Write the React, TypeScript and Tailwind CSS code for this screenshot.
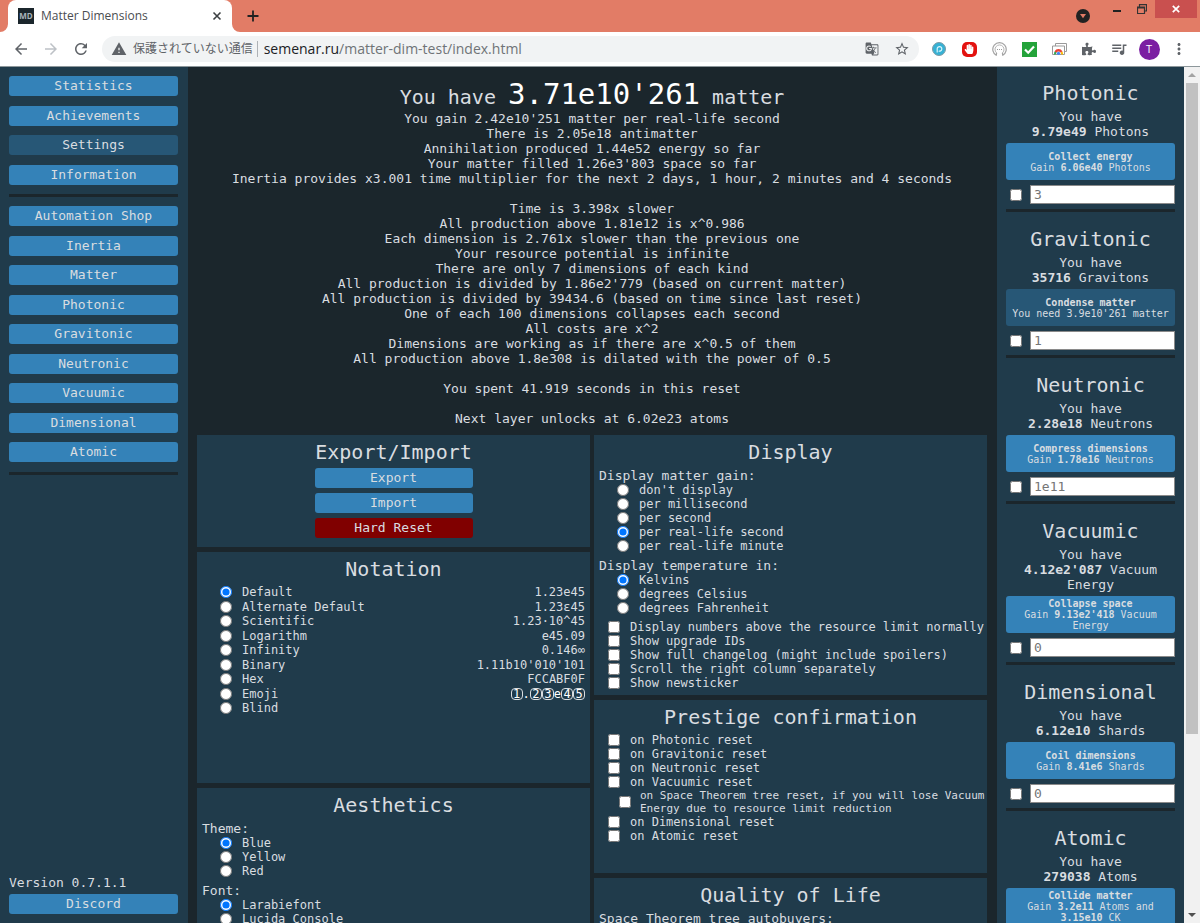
import React, { useId } from "react";
import { FaHandPaper, FaPuzzlePiece } from "react-icons/fa";
import {
  MdArrowBack,
  MdArrowForward,
  MdGTranslate,
  MdMoreVert,
  MdQueueMusic,
  MdRefresh,
  MdStarBorder,
  MdWarning,
} from "react-icons/md";

type NavItem = { label: string; active?: boolean };

type Layer = {
  name: string;
  amount: string;
  unit: string;
  action: string;
  prefix: string;
  gain?: string;
  suffix?: string;
  gain2?: string;
  suffix2?: string;
  locked?: boolean;
  value: string;
};

type Notation = { label: string; sample: React.ReactNode };

const mainNav: NavItem[] = [
  { label: "Statistics" },
  { label: "Achievements" },
  { label: "Settings", active: true },
  { label: "Information" },
];

const layerNav: NavItem[] = [
  { label: "Automation Shop" },
  { label: "Inertia" },
  { label: "Matter" },
  { label: "Photonic" },
  { label: "Gravitonic" },
  { label: "Neutronic" },
  { label: "Vacuumic" },
  { label: "Dimensional" },
  { label: "Atomic" },
];

// empty strings are blank lines
const summary: string[] = [
  "You gain 2.42e10'251 matter per real-life second",
  "There is 2.05e18 antimatter",
  "Annihilation produced 1.44e52 energy so far",
  "Your matter filled 1.26e3'803 space so far",
  "Inertia provides x3.001 time multiplier for the next 2 days, 1 hour, 2 minutes and 4 seconds",
  "",
  "Time is 3.398x slower",
  "All production above 1.81e12 is x^0.986",
  "Each dimension is 2.761x slower than the previous one",
  "Your resource potential is infinite",
  "There are only 7 dimensions of each kind",
  "All production is divided by 1.86e2'779 (based on current matter)",
  "All production is divided by 39434.6 (based on time since last reset)",
  "One of each 100 dimensions collapses each second",
  "All costs are x^2",
  "Dimensions are working as if there are x^0.5 of them",
  "All production above 1.8e308 is dilated with the power of 0.5",
  "",
  "You spent 41.919 seconds in this reset",
  "",
  "Next layer unlocks at 6.02e23 atoms",
];

const notations: Notation[] = [
  { label: "Default", sample: "1.23e45" },
  { label: "Alternate Default", sample: "1.23ε45" },
  { label: "Scientific", sample: "1.23·10^45" },
  { label: "Logarithm", sample: "e45.09" },
  { label: "Infinity", sample: "0.146∞" },
  { label: "Binary", sample: "1.11b10'010'101" },
  { label: "Hex", sample: "FCCABF0F" },
  { label: "Emoji", sample: <EmojiNumber value="1.23e45" /> },
  { label: "Blind", sample: "" },
];

const layers: Layer[] = [
  {
    name: "Photonic",
    amount: "9.79e49",
    unit: "Photons",
    action: "Collect energy",
    prefix: "Gain ",
    gain: "6.06e40",
    suffix: " Photons",
    value: "3",
  },
  {
    name: "Gravitonic",
    amount: "35716",
    unit: "Gravitons",
    action: "Condense matter",
    prefix: "You need 3.9e10'261 matter",
    locked: true,
    value: "1",
  },
  {
    name: "Neutronic",
    amount: "2.28e18",
    unit: "Neutrons",
    action: "Compress dimensions",
    prefix: "Gain ",
    gain: "1.78e16",
    suffix: " Neutrons",
    value: "1e11",
  },
  {
    name: "Vacuumic",
    amount: "4.12e2'087",
    unit: "Vacuum Energy",
    action: "Collapse space",
    prefix: "Gain ",
    gain: "9.13e2'418",
    suffix: " Vacuum Energy",
    value: "0",
  },
  {
    name: "Dimensional",
    amount: "6.12e10",
    unit: "Shards",
    action: "Coil dimensions",
    prefix: "Gain ",
    gain: "8.41e6",
    suffix: " Shards",
    value: "0",
  },
  {
    name: "Atomic",
    amount: "279038",
    unit: "Atoms",
    action: "Collide matter",
    prefix: "Gain ",
    gain: "3.2e11",
    suffix: " Atoms and ",
    gain2: "3.15e10",
    suffix2: " CK",
    value: "0",
  },
];

/* ---------- browser chrome ---------- */

function TabStrip() {
  return (
    <div className="flex h-8 shrink-0 items-start bg-[#e27c66]">
      <div className="relative ml-2 flex h-8 w-56 items-center rounded-t-lg bg-white pr-2.5 pl-2.5">
        <svg
          className="absolute bottom-0 -left-2 size-2"
          viewBox="0 0 8 8"
          aria-hidden="true"
        >
          <path d="M8 0v8H0a8 8 0 0 0 8-8z" fill="#fff" />
        </svg>
        <svg
          className="absolute -right-2 bottom-0 size-2"
          viewBox="0 0 8 8"
          aria-hidden="true"
        >
          <path d="M0 0v8h8a8 8 0 0 1-8-8z" fill="#fff" />
        </svg>
        <span className="flex size-4 items-center justify-center bg-[#1b262c] text-[8px] font-bold text-[#a9b4ba]">
          MD
        </span>
        <span className="ml-[7px] flex-1 text-xs text-[#4a4d51]">
          Matter Dimensions
        </span>
        <button type="button" aria-label="Close tab">
          <svg className="size-2.5" viewBox="0 0 10 10" aria-hidden="true">
            <path d="M1.5 1.5l7 7M8.5 1.5l-7 7" stroke="#3c4043" strokeWidth="1.6" />
          </svg>
        </button>
      </div>
      <button type="button" aria-label="New tab" className="mt-2.5 ml-[15px]">
        <svg className="size-3" viewBox="0 0 12 12" aria-hidden="true">
          <path d="M6 .5v11M.5 6h11" stroke="#222" strokeWidth="1.8" />
        </svg>
      </button>
      <button type="button" aria-label="Search tabs" className="mt-[9px] ml-auto">
        <svg className="size-3.5" viewBox="0 0 14 14" aria-hidden="true">
          <circle cx="7" cy="7" r="7" fill="#222" />
          <path d="M4 5h6L7 9.2z" fill="#e27c66" />
        </svg>
      </button>
      <div className="mr-[3px] ml-[23px] flex h-[18px] items-center">
        <button type="button" aria-label="Minimize">
          <svg className="h-4 w-2" viewBox="0 0 8 16" aria-hidden="true">
            <path d="M0 9h8v2H0z" fill="#222" />
          </svg>
        </button>
        <button type="button" aria-label="Restore" className="ml-4">
          <svg className="size-2.5" viewBox="0 0 10 10" aria-hidden="true">
            <path
              d="M.5 3h7v6.5h-7zM.5 3.8h7M2.5 3V.6h7V7h-2"
              fill="none"
              stroke="#333"
              strokeWidth="1.2"
            />
          </svg>
        </button>
        <button
          type="button"
          aria-label="Close"
          className="ml-2 flex h-[18px] w-[42px] items-center justify-center bg-[#c9504f]"
        >
          <svg className="size-2" viewBox="0 0 8 8" aria-hidden="true">
            <path d="M.8.8l6.4 6.4M7.2.8L.8 7.2" stroke="#fff" strokeWidth="1.7" />
          </svg>
        </button>
      </div>
    </div>
  );
}

function ToolCell(props: { label: string; children: React.ReactNode }) {
  return (
    <button
      type="button"
      aria-label={props.label}
      className="flex w-[30px] items-center justify-center text-[#5f6368]"
    >
      {props.children}
    </button>
  );
}

function Toolbar() {
  return (
    <div className="flex h-[35px] shrink-0 items-center border-b border-[#8d979b] bg-white pr-1.5 pl-3">
      <div className="flex gap-3 text-[#5f6368]">
        <button type="button" aria-label="Back">
          <MdArrowBack className="size-[18px]" />
        </button>
        <button type="button" aria-label="Forward" className="text-[#bdc1c6]">
          <MdArrowForward className="size-[18px]" />
        </button>
        <button type="button" aria-label="Reload">
          <MdRefresh className="size-[18px]" />
        </button>
      </div>
      <div className="mr-[5px] ml-3 flex h-[26px] flex-1 items-center rounded-full bg-[#f1f3f4] pr-0.5 pl-[9px]">
        <MdWarning className="size-4 text-[#5f6368]" />
        <span className="ml-1.5 text-xs whitespace-nowrap text-[#5f6368]">
          保護されていない通信
        </span>
        <span className="mr-1.5 ml-1 h-4 w-px bg-[#aeb2b6]" />
        <a href="#" className="min-w-0 flex-1 truncate text-sm text-[#6f7377]">
          <span className="text-[#202124]">semenar.ru</span>
          /matter-dim-test/index.html
        </a>
        <ToolCell label="Translate">
          <MdGTranslate className="size-3.5" />
        </ToolCell>
        <ToolCell label="Bookmark">
          <MdStarBorder className="size-4" />
        </ToolCell>
      </div>
      <ToolCell label="Extension P">
        <svg className="size-3.5" viewBox="0 0 14 14" aria-hidden="true">
          <circle cx="7" cy="7" r="6.5" fill="#36b1d4" stroke="#7d9aa4" />
          <path
            d="M5.2 10.5V7a2.3 2.3 0 1 1 1.5 2"
            fill="none"
            stroke="#d9f4fb"
            strokeWidth="1.2"
          />
        </svg>
      </ToolCell>
      <ToolCell label="Ad blocker">
        <span className="flex size-[15px] items-center justify-center rounded-[5px] bg-[#e3120f] text-white">
          <FaHandPaper className="size-2.5" />
        </span>
      </ToolCell>
      <ToolCell label="Extension">
        <svg className="size-[15px]" viewBox="0 0 15 15" fill="none" aria-hidden="true">
          <path d="M4.5 13.4a6.7 6.7 0 1 1 6 0" stroke="#a3a3a3" strokeWidth="1.2" />
          <path d="M5 11.2a4.5 4.5 0 1 1 5 0" stroke="#b5b5b5" />
          <path d="M5 7.5h1M7 7.5h1M9 7.5h1" stroke="#999" />
          <path d="M4.5 13.5V11M10.5 13.5V11" stroke="#a3a3a3" />
        </svg>
      </ToolCell>
      <ToolCell label="Checker">
        <svg className="size-[15px]" viewBox="0 0 15 15" aria-hidden="true">
          <path d="M0 0h15v15H0z" fill="#24a33a" />
          <path d="M3 7.5l3.2 3.2L12 4.5" fill="none" stroke="#fff" strokeWidth="2.2" />
        </svg>
      </ToolCell>
      <ToolCell label="Remote">
        <svg className="size-[15px]" viewBox="0 0 15 15" fill="none" aria-hidden="true">
          <path d="M3.5 4V1.5h11v8h-2" stroke="#9a9a9a" />
          <path d="M.5 4h12v8.5H.5z" fill="#fff" stroke="#9a9a9a" />
          <path d="M3 12.5a3.5 3.5 0 0 1 1-3" stroke="#34a853" strokeWidth="2" />
          <path d="M3.5 10a3.5 3.5 0 0 1 6 0" stroke="#ea4335" strokeWidth="2.4" />
          <path d="M9.5 10a3.500 3.500 0 0 1 .5 2.500" stroke="#fbbc05" strokeWidth="2" />
          <circle cx="6.5" cy="11.3" r="1.6" fill="#4285f4" />
        </svg>
      </ToolCell>
      <ToolCell label="Extensions">
        <FaPuzzlePiece className="size-3.5" />
      </ToolCell>
      <ToolCell label="Media control">
        <MdQueueMusic className="size-[18px]" />
      </ToolCell>
      <ToolCell label="Profile">
        <span className="flex size-[21px] items-center justify-center rounded-full bg-[#7b1fa2] text-[11px] text-white">
          T
        </span>
      </ToolCell>
      <ToolCell label="Menu">
        <MdMoreVert className="size-[18px]" />
      </ToolCell>
    </div>
  );
}

function ScrollBar() {
  return (
    <div className="flex w-4 shrink-0 flex-col items-center bg-[#f1f1f1]">
      <button
        type="button"
        aria-label="Scroll up"
        className="flex h-4 w-full items-center justify-center"
      >
        <svg className="h-1 w-2" viewBox="0 0 8 4" aria-hidden="true">
          <path d="M0 4l4-4 4 4z" fill="#a3a3a3" />
        </svg>
      </button>
      <div className="flex-1">
        <div className="h-[79%] w-3 bg-[#c1c1c1]" />
      </div>
      <button
        type="button"
        aria-label="Scroll down"
        className="flex h-4 w-full items-center justify-center"
      >
        <svg className="h-1 w-2" viewBox="0 0 8 4" aria-hidden="true">
          <path d="M0 0l4 4 4-4z" fill="#505050" />
        </svg>
      </button>
    </div>
  );
}

/* ---------- shared bits ---------- */

function NavButton({ label, active }: NavItem) {
  return (
    <button
      type="button"
      className={
        active
          ? "h-5 w-full rounded-[3px] bg-[#275776] leading-5"
          : "h-5 w-full rounded-[3px] bg-[#3482b8] leading-5"
      }
    >
      {label}
    </button>
  );
}

function Divider() {
  return <hr className="h-[3px] border-0 bg-[#1b262c]" />;
}

function Panel(props: {
  title: string;
  className?: string;
  children: React.ReactNode;
}) {
  return (
    <section className={`bg-[#203b4b] p-[5px] ${props.className ?? ""}`}>
      <h2 className="mb-1 text-center text-xl leading-6">{props.title}</h2>
      {props.children}
    </section>
  );
}

// digits are drawn as keycaps, everything else as plain text
function EmojiNumber({ value }: { value: string }) {
  return (
    <span className="flex items-center text-white">
      {value.split("").map((c, i) =>
        /\d/.test(c) ? (
          <span
            key={i}
            className="flex h-3 w-3 items-center justify-center rounded-[4px] border border-[#d9dde0] leading-3"
          >
            {c}
          </span>
        ) : (
          <span key={i}>{c}</span>
        ),
      )}
    </span>
  );
}

function RadioRow(props: {
  name: string;
  label: string;
  checked?: boolean;
  sample?: React.ReactNode;
}) {
  const id = useId();
  return (
    <div className="flex h-3.5 items-center pl-[18px] text-xs leading-3.5">
      <input
        id={id}
        type="radio"
        name={props.name}
        defaultChecked={props.checked}
        className="size-3 shrink-0"
      />
      <label htmlFor={id} className="flex flex-1 justify-between pl-2.5">
        <span>{props.label}</span>
        <span>{props.sample}</span>
      </label>
    </div>
  );
}

function RadioGroup(props: { title: string; options: string[]; selected: string }) {
  return (
    <fieldset className="mb-[5px]">
      <legend className="leading-[15px]">{props.title}</legend>
      {props.options.map((o) => (
        <RadioRow
          key={o}
          name={props.title}
          label={o}
          checked={o === props.selected}
        />
      ))}
    </fieldset>
  );
}

function CheckRow(props: { label: string; nested?: boolean }) {
  const id = useId();
  return (
    <div
      className={
        props.nested
          ? "-mr-1 flex items-center pl-5 text-[11px] leading-[13px]"
          : "-mr-1 flex h-3.5 items-center pl-[9px] text-xs leading-3.5"
      }
    >
      <input id={id} type="checkbox" className="size-3 shrink-0" />
      <label htmlFor={id} className={props.nested ? "pl-[9px]" : "pl-2.5"}>
        {props.label}
      </label>
    </div>
  );
}

/* ---------- columns ---------- */

function LeftColumn() {
  return (
    <nav className="flex w-47 shrink-0 flex-col bg-[#203b4b] py-[9px] pr-2.5 pl-[9px]">
      <div className="flex h-[109px] flex-col justify-between">
        {mainNav.map((n) => (
          <NavButton key={n.label} {...n} />
        ))}
      </div>
      <div className="my-[9px]">
        <Divider />
      </div>
      <div className="flex h-64 flex-col justify-between">
        {layerNav.map((n) => (
          <NavButton key={n.label} {...n} />
        ))}
      </div>
      <div className="mt-2.5">
        <Divider />
      </div>
      <div className="mt-auto">
        <div className="mb-1 leading-[15px]">Version 0.7.1.1</div>
        <NavButton label="Discord" />
      </div>
    </nav>
  );
}

function Center() {
  return (
    <main className="min-w-0 flex-1 pr-2.5 pl-[9px]">
      <header className="pt-[13px] pb-[9px] text-center">
        <h1 className="text-xl leading-7">
          You have <span className="text-[29px] text-white">3.71e10'261</span>{" "}
          matter
        </h1>
        {summary.map((line, i) => (
          <p key={i} className="h-[15px] leading-[15px] whitespace-nowrap">
            {line}
          </p>
        ))}
      </header>

      <div className="grid grid-cols-2 gap-1">
        <div className="flex flex-col gap-[5px]">
          <Panel title="Export/Import" className="pb-[9px]">
            <div className="mx-auto flex w-[158px] flex-col gap-[5px]">
              <NavButton label="Export" />
              <NavButton label="Import" />
              <button
                type="button"
                className="h-5 w-full rounded-[3px] bg-[#800000] leading-5"
              >
                Hard Reset
              </button>
            </div>
          </Panel>
          <Panel title="Notation" className="min-h-[231px]">
            <div className="flex h-[130px] flex-col justify-between">
              {notations.map((n, i) => (
                <RadioRow
                  key={n.label}
                  name="notation"
                  label={n.label}
                  sample={n.sample}
                  checked={i === 0}
                />
              ))}
            </div>
          </Panel>
          <Panel title="Aesthetics">
            <RadioGroup
              title="Theme:"
              options={["Blue", "Yellow", "Red"]}
              selected="Blue"
            />
            <RadioGroup
              title="Font:"
              options={["Larabiefont", "Lucida Console"]}
              selected="Larabiefont"
            />
          </Panel>
        </div>

        <div className="flex flex-col gap-[5px]">
          <Panel title="Display">
            <RadioGroup
              title="Display matter gain:"
              options={[
                "don't display",
                "per millisecond",
                "per second",
                "per real-life second",
                "per real-life minute",
              ]}
              selected="per real-life second"
            />
            <RadioGroup
              title="Display temperature in:"
              options={["Kelvins", "degrees Celsius", "degrees Fahrenheit"]}
              selected="Kelvins"
            />
            <CheckRow label="Display numbers above the resource limit normally" />
            <CheckRow label="Show upgrade IDs" />
            <CheckRow label="Show full changelog (might include spoilers)" />
            <CheckRow label="Scroll the right column separately" />
            <CheckRow label="Show newsticker" />
          </Panel>
          <Panel title="Prestige confirmation" className="min-h-[173px]">
            <CheckRow label="on Photonic reset" />
            <CheckRow label="on Gravitonic reset" />
            <CheckRow label="on Neutronic reset" />
            <CheckRow label="on Vacuumic reset" />
            <CheckRow
              nested
              label="on Space Theorem tree reset, if you will lose Vacuum Energy due to resource limit reduction"
            />
            <CheckRow label="on Dimensional reset" />
            <CheckRow label="on Atomic reset" />
          </Panel>
          <Panel title="Quality of Life">
            <div className="leading-[15px]">Space Theorem tree autobuyers:</div>
          </Panel>
        </div>
      </div>
    </main>
  );
}

function LayerCard({ layer }: { layer: Layer }) {
  return (
    <section className="mb-[15px]">
      <h2 className="mb-1 text-center text-xl leading-6">{layer.name}</h2>
      <p className="text-center leading-[15px]">
        You have
        <br />
        <b>{layer.amount}</b> {layer.unit}
      </p>
      <button
        type="button"
        className={
          layer.locked
            ? "mt-1 block h-[37px] w-full rounded-[3px] bg-[#275776] text-[10px] leading-[11px]"
            : "mt-1 block h-[37px] w-full rounded-[3px] bg-[#3482b8] text-[10px] leading-[11px]"
        }
      >
        <b>{layer.action}</b>
        <br />
        {layer.prefix}
        <b>{layer.gain}</b>
        {layer.suffix}
        <b>{layer.gain2}</b>
        {layer.suffix2}
      </button>
      <div className="my-[5px] flex items-center pl-1">
        <input
          type="checkbox"
          aria-label={`Automate ${layer.name}`}
          className="size-3 shrink-0"
        />
        <input
          type="text"
          aria-label={`${layer.name} threshold`}
          defaultValue={layer.value}
          className="ml-2 h-[19px] w-0 flex-1 border border-[#8a8a8a] bg-white px-[3px] text-[#757575]"
        />
      </div>
      <Divider />
    </section>
  );
}

export default function App() {
  return (
    <div className="flex h-screen flex-col overflow-hidden">
      <div className="font-['Open_Sans','Noto_Sans_CJK_JP',sans-serif]">
        <TabStrip />
        <Toolbar />
      </div>
      <div className="flex min-h-0 flex-1 bg-[#1b262c] font-['DejaVu_Sans_Mono','Liberation_Mono',monospace] text-[13px] text-[#d9dde0]">
        <LeftColumn />
        <Center />
        <aside className="w-[187px] shrink-0 bg-[#203b4b] px-[9px] pt-3.5">
          {layers.map((l) => (
            <LayerCard key={l.name} layer={l} />
          ))}
        </aside>
        <ScrollBar />
      </div>
    </div>
  );
}
